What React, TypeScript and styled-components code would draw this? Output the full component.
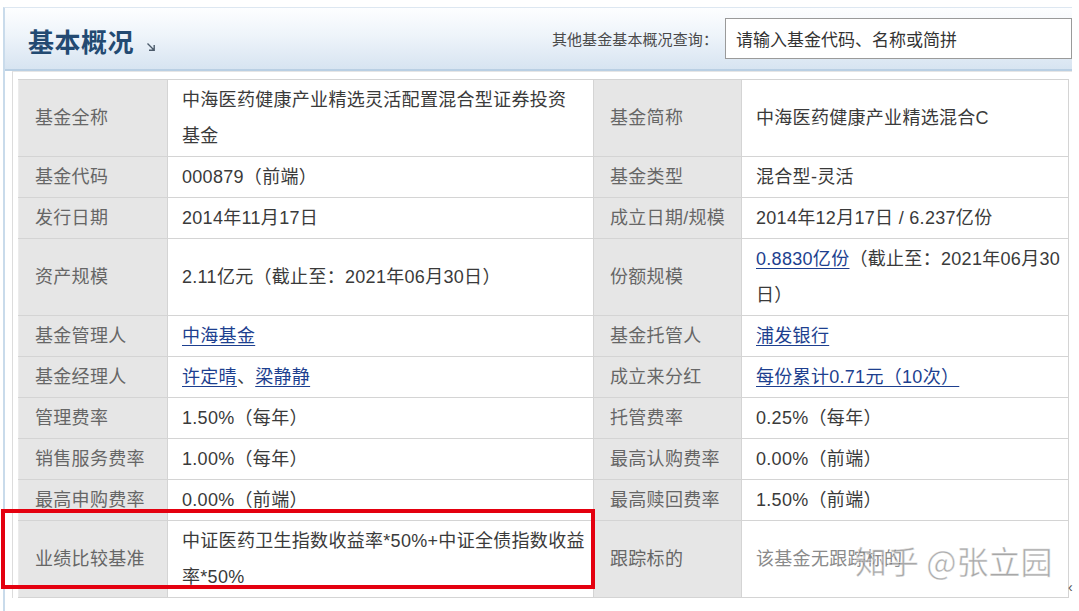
import React from "react";
import styled, { createGlobalStyle } from "styled-components";

const Global = createGlobalStyle`
  html, body { margin: 0; padding: 0; background: #fff; }
  body { font-family: "Liberation Sans", "Noto Sans CJK SC", sans-serif; overflow: hidden; }
`;

const Page = styled.div`
  width: 1079px;
  height: 611px;
  padding-top: 7px;
  padding-left: 3px;
  box-sizing: border-box;
  overflow: hidden;
  position: relative;
`;

const Panel = styled.section`
  width: 1069px;
  height: 604px;
  border-left: 2px solid #c9dbeb;
  border-top: 1px solid #dde7f1;
  box-sizing: border-box;
  position: relative;
`;

const Header = styled.header`
  height: 61px;
  display: flex;
  align-items: center;
  justify-content: space-between;
  padding-left: 23px;
  padding-right: 0;
  background: linear-gradient(#fdfeff 0%, #eef4fa 45%, #d7e4f1 100%);
  border-bottom: 2px solid #b9cfe3;
`;

const TitleWrap = styled.div`
  display: flex;
  align-items: flex-end;
  gap: 12px;
  padding-top: 4px;
`;

const Title = styled.h2`
  margin: 0;
  font-family: "Noto Sans CJK SC", sans-serif;
  font-size: 26px;
  font-weight: 700;
  color: #234a72;
  letter-spacing: 0.5px;
  line-height: 32px;
`;

const Arrow = styled.svg`
  width: 10px;
  height: 10px;
  margin-bottom: 5px;
`;

const Search = styled.div`
  display: flex;
  align-items: center;
  gap: 7px;
`;

const SearchLabel = styled.span`
  font-family: "Noto Sans CJK SC", sans-serif;
  font-size: 15px;
  color: #4a4a4a;
  letter-spacing: 0.1px;
`;

const SearchBox = styled.div`
  width: 347px;
  height: 41px;
  box-sizing: border-box;
  border: 1px solid #9a9a9a;
  background: #fff;
  display: flex;
  align-items: center;
  padding-left: 10px;
  font-family: "Noto Sans CJK SC", sans-serif;
  font-size: 17px;
  color: #333;
`;

const Body = styled.div`
  padding-left: 7px;
`;

const Inner = styled.div`
  border-left: 1px solid #dcdcdc;
  border-top: 1px solid #e6e6e6;
  padding: 7px 0 0 5px;
  position: relative;
`;

const Table = styled.table`
  width: 1050px;
  table-layout: fixed;
  border-collapse: collapse;
  font-size: 18px;
  letter-spacing: 0.3px;
`;

const Label = styled.th`
  background: #e6e6e6;
  color: #666;
  font-weight: normal;
  text-align: left;
  vertical-align: middle;
  padding: 2px 10px 2px 16px;
  line-height: 36px;
  border: 1px solid #d4d4d4;
  border-left-color: #ececec;
  white-space: nowrap;
`;

const Value = styled.td<{ $muted?: boolean }>`
  background: #fff;
  color: ${(p) => (p.$muted ? "#8a8a8a" : "#3a3a3a")};
  text-align: left;
  vertical-align: middle;
  padding: 2px 1px 2px 14px;
  line-height: 36px;
  border: 1px solid #d4d4d4;
`;

const Link = styled.a`
  color: #1d3f8f;
  text-decoration: underline;
  text-underline-offset: 3px;
`;

const Highlight = styled.div`
  position: absolute;
  left: -12px;
  top: 437px;
  width: 594px;
  height: 80px;
  box-sizing: border-box;
  border: 4px solid #e4000f;
  pointer-events: none;
`;

const Watermark = styled.div`
  position: absolute;
  left: 842px;
  top: 466px;
  font-family: "Noto Sans CJK SC", sans-serif;
  font-size: 32px;
  line-height: 44px;
  color: rgba(110, 110, 110, 0.6);
  -webkit-text-stroke: 1px rgba(255, 255, 255, 0.6);
  white-space: nowrap;
  pointer-events: none;
`;

const EdgeMark = styled.span`
  position: absolute;
  left: 1068px;
  top: 580px;
  font-size: 14px;
  line-height: 14px;
  color: #555;
`;

type Cell = React.ReactNode;
type Row = [string, Cell, string, Cell, boolean?];

const rows: Row[] = [
  [
    "基金全称",
    <>
      中海医药健康产业精选灵活配置混合型证券投资
      <br />
      基金
    </>,
    "基金简称",
    "中海医药健康产业精选混合C",
  ],
  ["基金代码", "000879（前端）", "基金类型", "混合型-灵活"],
  ["发行日期", "2014年11月17日", "成立日期/规模", "2014年12月17日 / 6.237亿份"],
  [
    "资产规模",
    "2.11亿元（截止至：2021年06月30日）",
    "份额规模",
    <>
      <Link>0.8830亿份</Link>（截止至：2021年06月30
      <br />
      日）
    </>,
  ],
  ["基金管理人", <Link>中海基金</Link>, "基金托管人", <Link>浦发银行</Link>],
  [
    "基金经理人",
    <>
      <Link>许定晴</Link>、<Link>梁静静</Link>
    </>,
    "成立来分红",
    <Link>每份累计0.71元（10次）</Link>,
  ],
  ["管理费率", "1.50%（每年）", "托管费率", "0.25%（每年）"],
  ["销售服务费率", "1.00%（每年）", "最高认购费率", "0.00%（前端）"],
  ["最高申购费率", "0.00%（前端）", "最高赎回费率", "1.50%（前端）"],
  [
    "业绩比较基准",
    <>
      中证医药卫生指数收益率*50%+中证全债指数收益
      <br />
      率*50%
    </>,
    "跟踪标的",
    "该基金无跟踪标的",
    true,
  ],
];

export default function App() {
  return (
    <>
      <Global />
      <Page>
        <Panel>
          <Header>
            <TitleWrap>
              <Title>基本概况</Title>
              <Arrow viewBox="0 0 10 10">
                <path d="M1.5 1.5 L8 8 M3 8.2 H8.2 V3" stroke="#4b5a6a" strokeWidth="1.4" fill="none" />
              </Arrow>
            </TitleWrap>
            <Search>
              <SearchLabel>其他基金基本概况查询：</SearchLabel>
              <SearchBox>请输入基金代码、名称或简拼</SearchBox>
            </Search>
          </Header>
          <Body>
            <Inner>
              <Table>
                <colgroup>
                  <col style={{ width: 149 }} />
                  <col style={{ width: 426 }} />
                  <col style={{ width: 148 }} />
                  <col style={{ width: 327 }} />
                </colgroup>
                <tbody>
                  {rows.map(([l1, v1, l2, v2, muted], i) => (
                    <tr key={i}>
                      <Label>{l1}</Label>
                      <Value>{v1}</Value>
                      <Label>{l2}</Label>
                      <Value $muted={muted}>{v2}</Value>
                    </tr>
                  ))}
                </tbody>
              </Table>
              <Highlight />
              <Watermark>知乎 @张立园</Watermark>
            </Inner>
          </Body>
        </Panel>
        <EdgeMark>‹</EdgeMark>
      </Page>
    </>
  );
}
